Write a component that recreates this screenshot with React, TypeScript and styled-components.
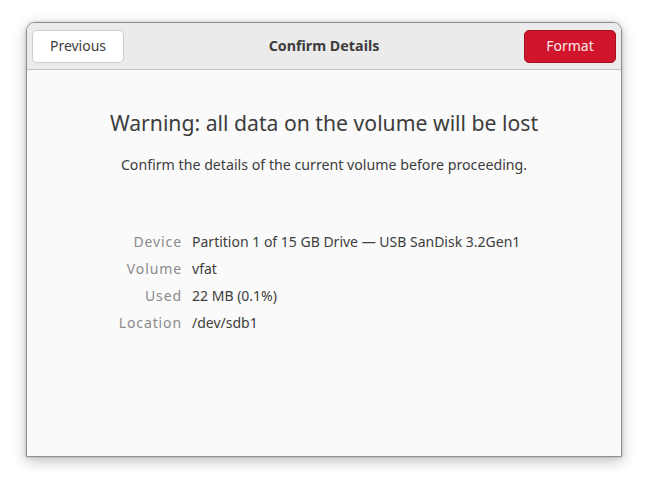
import React from 'react';
import styled, { createGlobalStyle } from 'styled-components';

const GlobalStyle = createGlobalStyle`
	html, body {
		margin: 0;
		padding: 0;
		background: #ffffff;
	}

	body {
		font-family: "Noto Sans", "DejaVu Sans", sans-serif;
		color: #3d3d3d;
	}
`;

const details = [
	{ label: 'Device', value: 'Partition 1 of 15 GB Drive — USB SanDisk 3.2Gen1' },
	{ label: 'Volume', value: 'vfat' },
	{ label: 'Used', value: '22 MB (0.1%)' },
	{ label: 'Location', value: '/dev/sdb1' },
];

export default function App() : React.ReactElement {
	return (
		<Page>
			<GlobalStyle />
			<Window>
				<HeaderBar>
					<Button>Previous</Button>
					<Title>Confirm Details</Title>
					<Button destructive>Format</Button>
				</HeaderBar>

				<Content>
					<Heading>Warning: all data on the volume will be lost</Heading>
					<Subtitle>Confirm the details of the current volume before proceeding.</Subtitle>

					<DetailsGrid>
						{details.map((row) => (
							<React.Fragment key={row.label}>
								<Label>{row.label}</Label>
								<Value>{row.value}</Value>
							</React.Fragment>
						))}
					</DetailsGrid>
				</Content>
			</Window>
		</Page>
	);
}

const Page = styled.div`
	width: 648px;
	height: 485px;
	padding: 22px 26px;
	box-sizing: border-box;
`;

const Window = styled.div`
	width: 596px;
	height: 435px;
	box-sizing: border-box;
	display: flex;
	flex-direction: column;
	background: #fafafa;
	border: 1px solid #8f8f8f;
	border-radius: 9px 9px 0 0;
	box-shadow: 0 4px 14px rgba(0, 0, 0, 0.26), 0 0 3px rgba(0, 0, 0, 0.18);
	overflow: hidden;
`;

const HeaderBar = styled.div`
	height: 46px;
	flex-shrink: 0;
	display: flex;
	align-items: center;
	justify-content: space-between;
	padding: 0 5px;
	background: #ebebeb;
	border-bottom: 1px solid #c4c4c4;
`;

const Title = styled.div`
	font-size: 14.3px;
	font-weight: 700;
	color: #3d3d3d;
	margin-top: -1px;
`;

const Button = styled.button<{ destructive?: boolean }>`
	width: 92px;
	height: 33px;
	box-sizing: border-box;
	border-radius: 5px;
	font-family: inherit;
	font-size: 14px;
	cursor: pointer;
	padding: 0 0 1px;
	background: ${(p) => (p.destructive ? '#d0152d' : '#ffffff')};
	color: ${(p) => (p.destructive ? '#fbe9ea' : '#3d3d3d')};
	border: 1px solid ${(p) => (p.destructive ? '#a5101f' : '#cdcdcd')};
`;

const Content = styled.div`
	flex: 1;
	display: flex;
	flex-direction: column;
	align-items: center;
	padding-top: 38px;
`;

const Heading = styled.div`
	font-size: 21.2px;
	line-height: 30px;
	color: #3d3d3d;
`;

const Subtitle = styled.div`
	margin-top: 16px;
	font-size: 14.2px;
	line-height: 22px;
	color: #3d3d3d;
`;

const DetailsGrid = styled.div`
	margin-top: 52px;
	padding-right: 9px;
	display: grid;
	grid-template-columns: auto auto;
	grid-auto-rows: 27px;
	column-gap: 10px;
	align-items: center;
	font-size: 14px;
`;

const Label = styled.div`
	text-align: right;
	color: #8a8a8a;
	letter-spacing: 0.9px;
`;

const Value = styled.div`
	color: #3d3d3d;
`;
